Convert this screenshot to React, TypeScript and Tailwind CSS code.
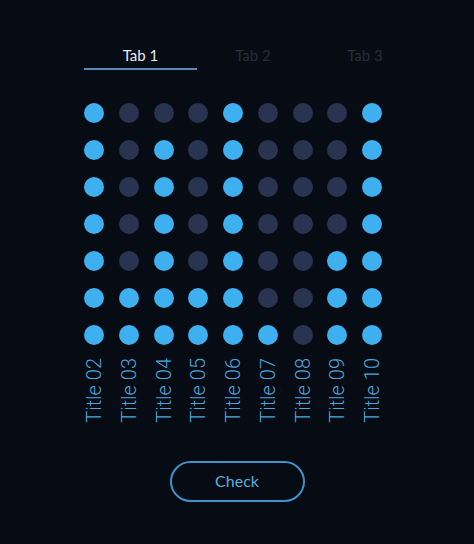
import React from "react";

const tabs = ["Tab 1", "Tab 2", "Tab 3"];

// each column lists its 7 dots, top to bottom (1 = lit)
const columns: { title: string; dots: number[] }[] = [
  { title: "Title 02", dots: [1, 1, 1, 1, 1, 1, 1] },
  { title: "Title 03", dots: [0, 0, 0, 0, 0, 1, 1] },
  { title: "Title 04", dots: [0, 1, 1, 1, 1, 1, 1] },
  { title: "Title 05", dots: [0, 0, 0, 0, 0, 1, 1] },
  { title: "Title 06", dots: [1, 1, 1, 1, 1, 1, 1] },
  { title: "Title 07", dots: [0, 0, 0, 0, 0, 0, 1] },
  { title: "Title 08", dots: [0, 0, 0, 0, 0, 0, 0] },
  { title: "Title 09", dots: [0, 0, 0, 0, 1, 1, 1] },
  { title: "Title 10", dots: [1, 1, 1, 1, 1, 1, 1] },
];

export default function App() {
  return (
    <div
      className="flex h-[544px] w-[474px] flex-col bg-[#070b14]"
      style={{ fontFamily: "Lato, 'Noto Sans', sans-serif" }}
    >
      <div className="flex pl-[84px] pt-[45px]">
        {tabs.map((t, i) => (
          <div
            key={t}
            className={
              i === 0
                ? "w-[113px] border-b-2 border-[#5b88b8] pb-[3px] text-center text-[15px] leading-[20px] text-[#e6ebf2]"
                : "w-[112px] border-b-2 border-transparent pb-[3px] text-center text-[15px] leading-[20px] text-[#272e3c]"
            }
          >
            {t}
          </div>
        ))}
      </div>

      <div className="mt-[33px] flex gap-[14.75px] pl-[84px]">
        {columns.map((c) => (
          <div key={c.title} className="flex w-5 flex-col items-center">
            <div className="flex flex-col gap-[17px]">
              {c.dots.map((d, j) => (
                <div
                  key={j}
                  className={d ? "h-5 w-5 rounded-full bg-[#3fb0ef]" : "h-5 w-5 rounded-full bg-[#293450]"}
                />
              ))}
            </div>
            <div
              className="mt-[13px] rotate-180 text-[20px] font-light leading-[20px] text-[#4aa6dc] [writing-mode:vertical-rl]"
              style={{ fontFamily: "Roboto, 'Noto Sans', sans-serif" }}
            >
              {c.title}
            </div>
          </div>
        ))}
      </div>

      <div className="mt-[38px] flex justify-center">
        <button className="h-[41px] w-[135px] rounded-full border-2 border-[#3d93c9] text-[16px] text-[#5aaedd]">
          Check
        </button>
      </div>
    </div>
  );
}
